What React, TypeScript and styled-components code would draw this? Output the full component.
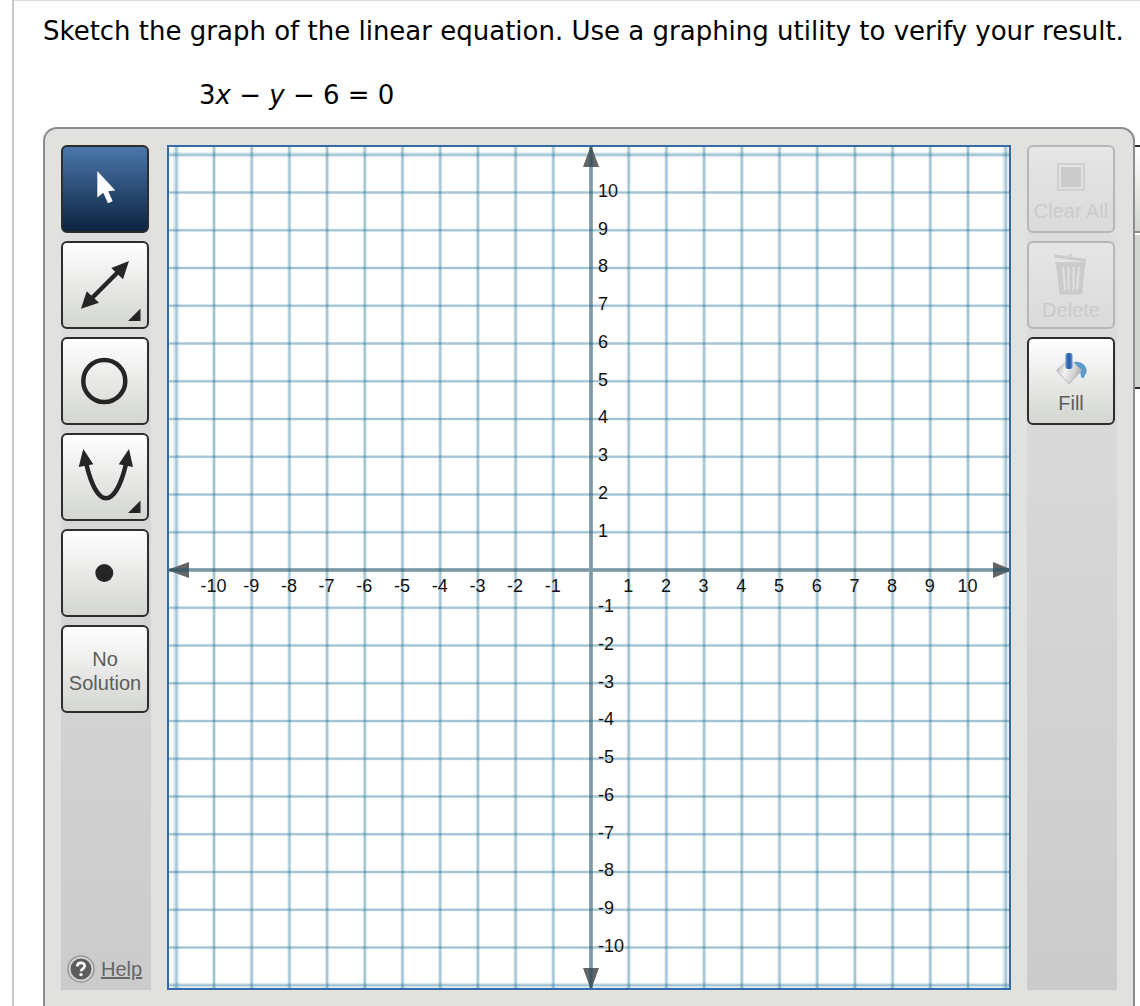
import React, { useState } from "react";
import styled, { createGlobalStyle, css } from "styled-components";

const GlobalStyle = createGlobalStyle`
  *, *::before, *::after { box-sizing: border-box; }
  body { margin: 0; background: #fff; color: #000; font-family: Verdana, "DejaVu Sans", sans-serif; }
`;

const Page = styled.main`
  margin-left: 12px;
  border-left: 2px solid #c8c8c8;
`;

const Content = styled.div`
  border-top: 1px solid #dcdcdc;
  padding: 14px 0 0 29px;
`;

const Prompt = styled.p`
  margin: 0 0 32px;
  font-size: 26px;
  line-height: 32px;
  white-space: nowrap;
`;

const Equation = styled.p`
  margin: 0 0 16px 156px;
  font-size: 26px;
  line-height: 32px;
`;

const Workspace = styled.div`
  display: flex;
  align-items: flex-start;
`;

const Panel = styled.section`
  flex: 1;
  min-width: 0;
  display: grid;
  grid-template-columns: 90px minmax(0, 1fr) 90px;
  gap: 16px;
  padding: 16px;
  border: 2px solid #8c8c8c;
  border-bottom: 0;
  border-radius: 14px 14px 0 0;
  background: #e1e1df;
`;

const Drawer = styled.div`
  width: 5px;
  margin-top: 18px;
  display: flex;
  flex-direction: column;
  gap: 2px;
`;

const DrawerTop = styled.div`
  height: 88px;
  border-top: 2px solid #2d2d2d;
  border-bottom: 2px solid #8c8c8c;
  background: linear-gradient(#fff, #d3d5d0);
`;

const DrawerBody = styled.div`
  height: 154px;
  border-bottom: 2px solid #2d2d2d;
  background: #d3d5d0;
`;

const Toolbar = styled.div`
  display: flex;
  flex-direction: column;
  align-items: flex-start;
  gap: 8px;
  background: linear-gradient(#e0e0e0, #cbcbcb);
`;

const ToolButton = styled.button<{ $active?: boolean; $top?: number; $gap?: number }>`
  display: flex;
  flex-direction: column;
  align-items: center;
  justify-content: flex-start;
  gap: ${(p) => p.$gap ?? 0}px;
  width: 88px;
  height: 88px;
  padding: ${(p) => p.$top ?? 0}px 0 0;
  border: 2px solid #2d2d2d;
  border-radius: 6px;
  background: linear-gradient(#fff, #d3d5d0);
  color: #5c5c5c;
  font: 20px/24px "Liberation Sans", Arial, sans-serif;
  white-space: nowrap;

  ${(p) =>
    p.$active &&
    css`
      background: linear-gradient(#4a77ab, #0d2340);
    `}

  &:disabled {
    border-color: #b7b7b7;
    background: linear-gradient(#e6e6e6, #dadada);
    color: #cbcbcb;
  }

  svg { display: block; flex: none; }
`;

const Help = styled.a`
  display: flex;
  align-items: center;
  gap: 6px;
  margin: auto 0 6px 6px;
  color: #666;
  font: 20px/30px "Liberation Sans", Arial, sans-serif;
`;

const GraphFrame = styled.div`
  border: 2px solid #336ca6;
  background: #fff;

  svg { display: block; width: 100%; height: auto; }
`;

const AxisLabel = styled.text`
  font: 18px "Liberation Sans", Arial, sans-serif;
  fill: #111;
`;

const CX = 422;
const CY = 423;
const STEP_X = 37.7;
const STEP_Y = 37.75;
const INDEXES = Array.from({ length: 23 }, (_, i) => i - 11).filter((n) => n !== 0);
const LABELS = INDEXES.filter((n) => Math.abs(n) <= 10);

function Graph() {
  return (
    <GraphFrame>
      <svg viewBox="0 0 840 841" role="img" aria-label="Coordinate plane">
        <g stroke="#1f7298">
          {INDEXES.map((n) => {
            const x = CX + n * STEP_X;
            const y = CY - n * STEP_Y;
            const edge = Math.abs(n) === 11;
            return (
              <g key={n}>
                <path d={`M${x} 0V841`} strokeWidth={edge ? 6 : 4} opacity="0.15" />
                <path d={`M${x} 0V841`} strokeWidth="2" opacity="0.3" />
                <path d={`M0 ${y}H840`} strokeWidth={edge ? 5 : 3} opacity="0.15" />
                <path d={`M0 ${y}H840`} strokeWidth="2" opacity="0.3" />
              </g>
            );
          })}
        </g>
        <g fill="#646464">
          <path d="M422 -2L430 20H414Z" />
          <path d="M422 843L430 821H414Z" />
          <path d="M-2 423L20 415V431Z" />
          <path d="M844 423L824 415V431Z" />
        </g>
        <g stroke="#26586a">
          <path d="M422 0V841M0 423H840" strokeWidth="4" opacity="0.5" />
          <path d="M422 0V841M0 423H840" strokeWidth="2" opacity="0.2" />
        </g>
        {LABELS.map((n) => (
          <AxisLabel key={`x${n}`} x={CX + n * STEP_X - 0.5} y={445} textAnchor="middle">
            {n}
          </AxisLabel>
        ))}
        {LABELS.map((n) => (
          <AxisLabel key={`y${n}`} x={429} y={Math.round(CY - n * STEP_Y + 4.4)}>
            {n}
          </AxisLabel>
        ))}
      </svg>
    </GraphFrame>
  );
}

const Canvas = ({ children }: { children: React.ReactNode }) => (
  <svg width="84" height="84" viewBox="0 0 84 84" fill="#252525" aria-hidden="true">
    {children}
  </svg>
);

const MoreCorner = () => <path d="M65 78H77.5V65.5Z" />;

const TOOLS = [
  {
    id: "Select",
    icon: (
      <path fill="#fff" d="M34.3 24V50.5L40.3 45.7L45 56.3L49.7 54.3L45.2 44.2L52.3 43.5Z" />
    ),
  },
  {
    id: "Line",
    icon: (
      <>
        <path d="M27 57L57 27" stroke="#252525" strokeWidth="4.5" />
        <path d="M66 18L48.3 25L60 36.3ZM18 65.7L23.7 48.3L36 59.7Z" />
        <MoreCorner />
      </>
    ),
  },
  {
    id: "Circle",
    icon: <circle cx="41.3" cy="42" r="21" fill="none" stroke="#252525" strokeWidth="4.5" />,
  },
  {
    id: "Parabola",
    icon: (
      <>
        <path
          d="M23.3 29C28 49 35 63.2 43 63.2S58.3 49 63 29"
          fill="none"
          stroke="#252525"
          strokeWidth="4.5"
        />
        <path d="M20.3 14L15.7 32L30.3 29.3ZM66 14L55.7 29.3L70 32Z" />
        <MoreCorner />
      </>
    ),
  },
  { id: "Point", icon: <circle cx="41.3" cy="42" r="9" /> },
];

const ClearIcon = () => (
  <svg width="28" height="28" viewBox="0 0 28 28" aria-hidden="true">
    <rect x="1" y="1" width="26" height="26" fill="none" stroke="#d0d0d0" strokeWidth="2" />
    <rect x="4" y="4" width="20" height="20" fill="#cbcbcb" />
  </svg>
);

const TrashIcon = () => (
  <svg width="34" height="43" viewBox="0 0 34 43" aria-hidden="true">
    <path d="M0.5 3L32 7.5" stroke="#cbcbcb" strokeWidth="3" />
    <path d="M14 3L16.5 0L19 4Z" fill="#cbcbcb" />
    <path d="M1 9H32L30.5 18L28 41.5H5.5L3 18Z" fill="#cbcbcb" />
    <path d="M9 14L11 37M14.5 14V37M19.5 14V37M25 14L23 37" stroke="#e0e0e0" strokeWidth="2" />
  </svg>
);

const FillIcon = () => (
  <svg width="32" height="32" viewBox="0 0 32 32" aria-hidden="true">
    <defs>
      <linearGradient id="bucket" x1="0" y1="0.3" x2="1" y2="0.7">
        <stop offset="0" stopColor="#b9b9b9" />
        <stop offset="0.35" stopColor="#f2f2f2" />
        <stop offset="0.7" stopColor="#cfcfcf" />
        <stop offset="1" stopColor="#999" />
      </linearGradient>
      <linearGradient id="handle">
        <stop offset="0" stopColor="#5d93d2" />
        <stop offset="0.5" stopColor="#2458a8" />
        <stop offset="1" stopColor="#5d93d2" />
      </linearGradient>
    </defs>
    <path d="M19 9C25 8 32.5 12 31.5 19L28.5 25.5L26 24L25 17Z" fill="#5b9bc9" />
    <path d="M1.5 17.5L13.5 6.5L27 17L14 31Z" fill="url(#bucket)" stroke="#aaa" strokeWidth="0.7" />
    <rect x="10.5" y="0" width="7" height="16" rx="2.5" fill="url(#handle)" />
  </svg>
);

const HelpIcon = () => (
  <svg width="28" height="28" viewBox="0 0 28 28" aria-hidden="true">
    <circle cx="14" cy="14" r="13" fill="#d8d8d8" stroke="#999" strokeWidth="1.6" />
    <circle cx="14" cy="14" r="10.5" fill="#5c5c5c" />
    <path
      d="M10.3 11.5C10.3 6.8 17.7 6.8 17.7 11C17.7 13.8 14 13.8 14 16.3"
      fill="none"
      stroke="#fff"
      strokeWidth="2.6"
    />
    <circle cx="14" cy="19.6" r="1.7" fill="#fff" />
  </svg>
);

export default function App() {
  const [tool, setTool] = useState("Select");
  return (
    <Page>
      <GlobalStyle />
      <Content>
        <Prompt>
          Sketch the graph of the linear equation. Use a graphing utility to verify your result.
        </Prompt>
        <Equation>
          3<i>x</i> − <i>y</i> − 6 = 0
        </Equation>
        <Workspace>
          <Panel aria-label="Graphing tool">
            <Toolbar>
              {TOOLS.map((t) => (
                <ToolButton
                  key={t.id}
                  type="button"
                  aria-label={t.id}
                  aria-pressed={tool === t.id}
                  $active={tool === t.id}
                  onClick={() => setTool(t.id)}
                >
                  <Canvas>{t.icon}</Canvas>
                </ToolButton>
              ))}
              <ToolButton type="button" $top={20}>
                <span>No</span>
                <span>Solution</span>
              </ToolButton>
              <Help href="#help">
                <HelpIcon />
                Help
              </Help>
            </Toolbar>
            <Graph />
            <Toolbar>
              <ToolButton type="button" disabled $top={16} $gap={8}>
                <ClearIcon />
                <span>Clear All</span>
              </ToolButton>
              <ToolButton type="button" disabled $top={10} $gap={2}>
                <TrashIcon />
                <span>Delete</span>
              </ToolButton>
              <ToolButton type="button" $top={14} $gap={6}>
                <FillIcon />
                <span>Fill</span>
              </ToolButton>
            </Toolbar>
          </Panel>
          <Drawer>
            <DrawerTop />
            <DrawerBody />
          </Drawer>
        </Workspace>
      </Content>
    </Page>
  );
}
